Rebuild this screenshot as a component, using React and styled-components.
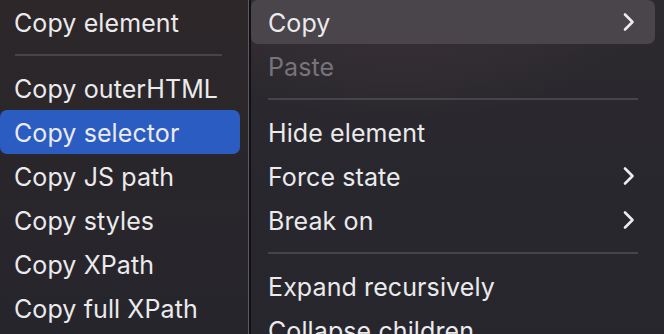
import React from 'react';
import styled, { createGlobalStyle } from 'styled-components';

const GlobalStyle = createGlobalStyle`
  html, body {
    margin: 0;
    padding: 0;
    background: #1c1b20;
    overflow: hidden;
  }
  body {
    font-family: Inter, "Liberation Sans", sans-serif;
    -webkit-font-smoothing: antialiased;
  }
`;

const Stage = styled.div`
  display: flex;
  width: 664px;
  height: 334px;
  overflow: hidden;
`;

const Menu = styled.div`
  display: flex;
  flex-direction: column;
  flex: ${(p) => (p.grow ? 1 : 'none')};
  width: ${(p) => (p.width ? `${p.width}px` : 'auto')};
  height: 360px;
  padding: ${(p) => p.pad};
  box-sizing: border-box;
  background: ${(p) => p.bg};
  border-right: ${(p) => (p.edge ? '1px solid #5d5a60' : 'none')};
  border-left: ${(p) => (p.outline ? '2px solid #111014' : 'none')};
  border-bottom-right-radius: ${(p) => (p.edge ? '10px' : '0')};
`;

const Item = styled.div`
  display: flex;
  align-items: center;
  justify-content: space-between;
  height: 44px;
  flex: none;
  box-sizing: border-box;
  padding: ${(p) => p.pad};
  padding-top: 2px;
  border-radius: 7px;
  font-size: 25px;
  letter-spacing: 0.1px;
  color: ${(p) => (p.disabled ? '#76747a' : '#ebeaec')};
  background: ${(p) =>
    p.active === 'blue' ? '#2b5cc1' : p.active === 'grey' ? '#49454a' : 'transparent'};
  white-space: nowrap;

  svg {
    margin-top: -2px;
  }
`;

const Separator = styled.div`
  height: 22px;
  flex: none;
  display: flex;
  align-items: center;
  padding: ${(p) => p.pad};

  &::after {
    content: '';
    flex: 1;
    height: 2px;
    background: #47454b;
  }
`;

const Chevron = () => (
  <svg width="14" height="20" viewBox="0 0 14 20" fill="none">
    <path
      d="M3 2.5 L10.5 10 L3 17.5"
      stroke="#ebeaec"
      strokeWidth="2.6"
      strokeLinecap="round"
      strokeLinejoin="round"
    />
  </svg>
);

const copyItems = [
  'Copy outerHTML',
  'Copy selector',
  'Copy JS path',
  'Copy styles',
  'Copy XPath',
  'Copy full XPath',
];

const App = () => (
  <>
    <GlobalStyle />
    <Stage>
      <Menu
        width={249}
        pad="0 8px 0 0"
        edge
        bg="linear-gradient(180deg, #2d2729 0%, #29262b 45%, #26252c 100%)"
      >
        <Item pad="0 0 0 14px">Copy element</Item>
        <Separator pad="0 18px 0 15px" />
        {copyItems.map((label) => (
          <Item
            key={label}
            pad="0 0 0 14px"
            active={label === 'Copy selector' ? 'blue' : undefined}
          >
            {label}
          </Item>
        ))}
      </Menu>
      <Menu
        grow
        outline
        pad="0 9px 0 0"
        bg="radial-gradient(ellipse 260px 140px at 150px -20px, #4a3d40 0%, #342e33 45%, rgba(40,39,45,0) 100%), linear-gradient(180deg, #2d2a2f 0%, #28272d 50%, #27262c 100%)"
      >
        <Item pad="0 19px 0 17px" active="grey">
          Copy <Chevron />
        </Item>
        <Item pad="0 19px 0 17px" disabled>
          Paste
        </Item>
        <Separator pad="0 17px 0 17px" />
        <Item pad="0 19px 0 17px">Hide element</Item>
        <Item pad="0 19px 0 17px">
          Force state <Chevron />
        </Item>
        <Item pad="0 19px 0 17px">
          Break on <Chevron />
        </Item>
        <Separator pad="0 17px 0 17px" />
        <Item pad="0 19px 0 17px">Expand recursively</Item>
        <Item pad="0 19px 0 17px">Collapse children</Item>
      </Menu>
    </Stage>
  </>
);

export default App;
